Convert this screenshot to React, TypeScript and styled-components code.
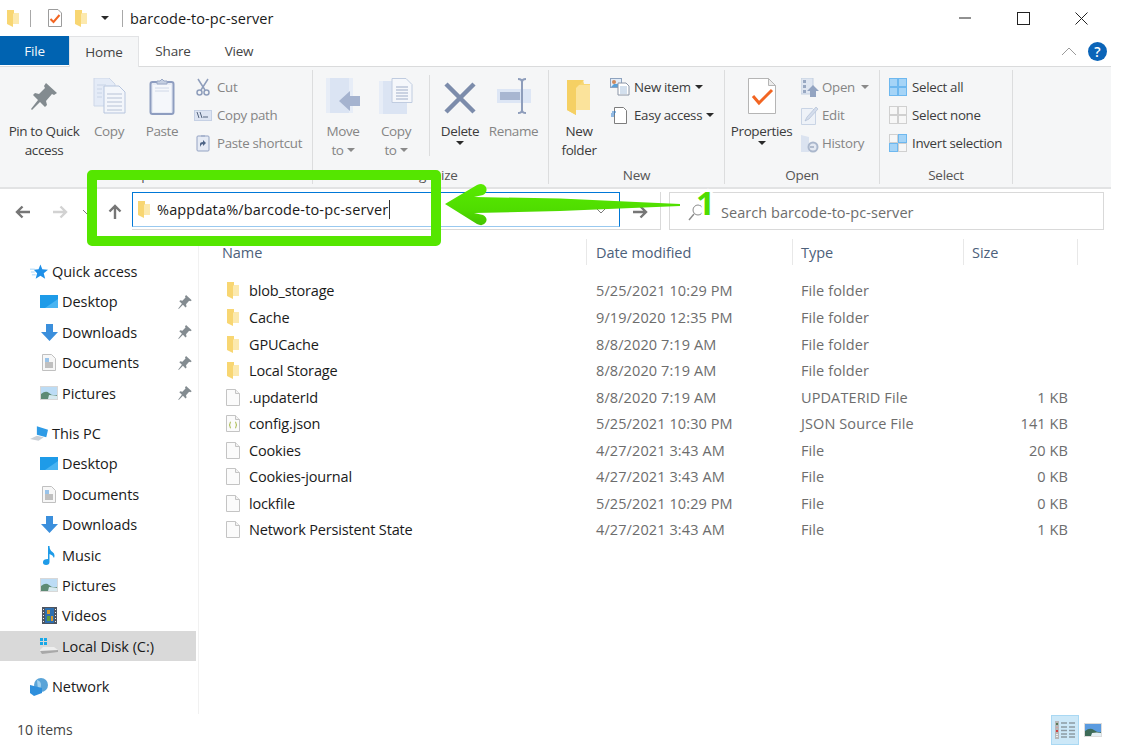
import React from 'react';
import styled, { createGlobalStyle } from 'styled-components';

const GlobalStyle = createGlobalStyle`
    html, body {
        margin: 0;
        padding: 0;
        background: #fff;
    }
    body {
        font-family: 'Open Sans', 'Noto Sans', sans-serif;
        font-size: 14.5px;
        letter-spacing: -0.05px;
        color: #1a1a1a;
    }
`;

const Page = styled.div`
    position: relative;
    width: 1142px;
    height: 752px;
    overflow: hidden;
    background: #fff;
`;

const Window = styled.div`
    display: flex;
    flex-direction: column;
    width: 1111px;
    height: 745px;
`;

/* title bar */

const TitleBar = styled.div`
    display: flex;
    align-items: center;
    height: 36px;
    flex: none;
`;

const QuickIcon = styled.span<{ $width: number }>`
    display: flex;
    justify-content: center;
    align-items: center;
    width: ${props => props.$width}px;
`;

const TitleSeparator = styled.span`
    width: 1px;
    height: 17px;
    background: #a8a8a8;
`;

const TitleText = styled.span`
    margin-left: 7px;
    letter-spacing: 0.1px;
    color: #1a1a1a;
`;

const WindowControls = styled.div`
    display: flex;
    margin-left: auto;
    margin-right: 1px;
`;

const WindowControl = styled.span`
    display: flex;
    justify-content: center;
    align-items: center;
    width: 58px;
    height: 34px;
`;

/* tabs */

const TabRow = styled.div`
    display: flex;
    align-items: flex-end;
    height: 30px;
    flex: none;
`;

const Tab = styled.div<{ $active?: boolean; $width: number }>`
    display: flex;
    justify-content: center;
    align-items: center;
    width: ${props => props.$width}px;
    height: ${props => (props.$active ? '31px' : '29px')};
    margin-bottom: ${props => (props.$active ? '-1px' : '1px')};
    background: ${props => (props.$active ? '#f5f6f7' : 'transparent')};
    border: ${props => (props.$active ? '1px solid #e2e3e5' : 'none')};
    border-bottom: none;
    box-sizing: border-box;
    font-size: 13.5px;
    letter-spacing: -0.2px;
    color: #444;
    position: relative;
`;

const FileTab = styled(Tab)`
    background: #0063b1;
    color: #f2f7fb;
    height: 29px;
    margin-bottom: 1px;
`;

const TabSpacer = styled.div`
    display: flex;
    justify-content: flex-end;
    align-items: center;
    gap: 11px;
    flex: 1;
    height: 30px;
    padding-right: 4px;
`;

const HelpBadge = styled.span`
    display: flex;
    justify-content: center;
    align-items: center;
    width: 19px;
    height: 19px;
    border-radius: 50%;
    background: #0a64b8;
    color: #fff;
    font-size: 14px;
    font-weight: 600;
`;

/* ribbon */

const Ribbon = styled.div`
    display: flex;
    height: 123px;
    flex: none;
    box-sizing: border-box;
    background: #f5f6f7;
    border-top: 1px solid #dadbdc;
    border-bottom: 2px solid #e2e3e4;
`;

const Group = styled.div<{ $width: number }>`
    display: flex;
    flex-direction: column;
    width: ${props => props.$width}px;
    margin: 3px 0;
    box-sizing: border-box;
    border-right: 1px solid #dcddde;
`;

const GroupBody = styled.div<{ $pad?: number }>`
    display: flex;
    flex: 1;
    padding-left: ${props => props.$pad || 0}px;
`;

const GroupLabel = styled.div`
    height: 19px;
    line-height: 21px;
    font-size: 13.5px;
    letter-spacing: -0.3px;
    text-align: center;
    color: #555;
`;

const LargeButton = styled.div<{ $width: number; $disabled?: boolean }>`
    display: flex;
    flex-direction: column;
    align-items: center;
    flex: none;
    width: ${props => props.$width}px;
    padding-top: 8px;
    font-size: 13.5px;
    letter-spacing: -0.4px;
    line-height: 19px;
    text-align: center;
    color: ${props => (props.$disabled ? '#858585' : '#3c3c3c')};
`;

const LargeIcon = styled.div`
    display: flex;
    justify-content: center;
    align-items: flex-start;
    height: 44px;
`;

const Caret = styled.span<{ $light?: boolean; $gap?: number }>`
    display: inline-block;
    width: 0;
    height: 0;
    margin-left: ${props => props.$gap ?? 4}px;
    vertical-align: 3px;
    border-left: 4px solid transparent;
    border-right: 4px solid transparent;
    border-top: 4px solid ${props => (props.$light ? '#8a8a8a' : '#2a2a2a')};
`;

const SmallColumn = styled.div`
    display: flex;
    flex-direction: column;
    flex: none;
    padding-top: 3px;
`;

const SmallButton = styled.div<{ $disabled?: boolean }>`
    display: flex;
    align-items: center;
    height: 28px;
    font-size: 13.3px;
    letter-spacing: -0.3px;
    white-space: nowrap;
    color: ${props => (props.$disabled ? '#858585' : '#3c3c3c')};
`;

const SmallIcon = styled.span<{ $width: number; $gap: number }>`
    display: flex;
    justify-content: center;
    flex: none;
    width: ${props => props.$width}px;
    margin-right: ${props => props.$gap}px;
`;

const OrganizeDivider = styled.div`
    width: 1px;
    height: 81px;
    margin: 5px 0 0 5px;
    background: #dcddde;
`;

/* address row */

const AddressRow = styled.div`
    display: flex;
    height: 49px;
    flex: none;
    padding-top: 3px;
    box-sizing: border-box;
`;

const NavButton = styled.span<{ $width: number }>`
    display: flex;
    justify-content: center;
    align-items: center;
    width: ${props => props.$width}px;
    height: 40px;
`;

const AddressOuter = styled.div`
    display: flex;
    width: 529px;
    height: 38px;
    margin-left: 2px;
    box-sizing: border-box;
    border: 1px solid #d9d9d9;
    border-left: none;
    border-top: none;
`;

const AddressField = styled.div`
    display: flex;
    align-items: center;
    width: 488px;
    height: 35px;
    box-sizing: border-box;
    padding: 0 13px 0 5px;
    border: 1px solid #0078d7;
    border-bottom-color: #99c9ef;
`;

const AddressText = styled.span`
    margin-left: 7px;
    padding-right: 1px;
    border-right: 1px solid #333;
    letter-spacing: 0.15px;
    color: #1a1a1a;
`;

const AddressChevron = styled.span`
    display: flex;
    margin-left: auto;
    padding-top: 2px;
`;

const GoButton = styled.span`
    display: flex;
    justify-content: center;
    align-items: center;
    flex: 1;
    height: 36px;
    padding-top: 2px;
`;

const SearchField = styled.div`
    display: flex;
    align-items: center;
    gap: 15px;
    width: 435px;
    height: 38px;
    padding: 2px 0 0 18px;
    margin-left: 8px;
    box-sizing: border-box;
    border: 1px solid #d9d9d9;
    letter-spacing: 0.05px;
    color: #6d6d6d;
`;

/* content */

const Content = styled.div`
    display: flex;
    flex: 1;
    min-height: 0;
`;

const Sidebar = styled.nav`
    width: 199px;
    flex: none;
    padding-top: 18.4px;
    box-sizing: border-box;
    border-right: 1px solid #f1f1f1;
`;

const NavGroup = styled.div`
    margin-bottom: 10px;
    margin-right: 2px;
`;

const NavRow = styled.div<{ $top?: boolean; $selected?: boolean }>`
    display: flex;
    align-items: center;
    gap: 4px;
    height: 30.4px;
    padding-left: ${props => (props.$top ? '30px' : '40px')};
    padding-right: 4px;
    background: ${props => (props.$selected ? '#d9d9d9' : 'transparent')};
    color: #1a1a1a;
`;

const NavIcon = styled.span`
    display: flex;
    justify-content: center;
    width: 18px;
    flex: none;
`;

const NavPin = styled.span`
    display: flex;
    margin-left: auto;
`;

const Main = styled.main`
    flex: 1;
    padding-top: 1px;
`;

const columns = '388px 206px 171px 114px';

const HeaderRow = styled.div`
    display: grid;
    grid-template-columns: ${columns};
    height: 26px;
    margin-bottom: 12.7px;
`;

const HeaderCell = styled.div<{ $pad: number }>`
    display: flex;
    align-items: center;
    box-sizing: border-box;
    padding-left: ${props => props.$pad}px;
    border-right: 1px solid #e8e8e8;
    color: #4c607a;
`;

const FileRow = styled.div`
    display: grid;
    grid-template-columns: ${columns};
    align-items: center;
    height: 26.55px;
`;

const NameCell = styled.div`
    display: flex;
    align-items: center;
    gap: 8px;
    padding-left: 26px;
    letter-spacing: -0.16px;
    color: #1a1a1a;
`;

const FileIcon = styled.span`
    display: flex;
    justify-content: center;
    width: 16px;
    flex: none;
`;

const InfoCell = styled.div<{ $pad: number; $right?: boolean }>`
    padding: ${props => (props.$right ? `0 ${props.$pad}px 0 0` : `0 0 0 ${props.$pad}px`)};
    text-align: ${props => (props.$right ? 'right' : 'left')};
    letter-spacing: 0.1px;
    color: #6d6d6d;
`;

/* status bar */

const StatusBar = styled.div`
    display: flex;
    align-items: center;
    height: 31px;
    flex: none;
    padding-left: 17px;
    font-size: 14px;
    letter-spacing: 0;
    color: #444;
`;

const ViewButtons = styled.div`
    display: flex;
    align-items: center;
    margin-left: auto;
    margin-right: 4px;
`;

const ViewButton = styled.span<{ $active?: boolean }>`
    display: flex;
    justify-content: center;
    align-items: center;
    width: 28px;
    height: 30px;
    box-sizing: border-box;
    background: ${props => (props.$active ? '#cce8f8' : 'transparent')};
    border: ${props => (props.$active ? '1px solid #a9d8f3' : 'none')};
`;

/* annotation on top of the screenshot */

const Highlight = styled.div`
    position: absolute;
    left: 87px;
    top: 170px;
    width: 354px;
    height: 76px;
    box-sizing: border-box;
    border: 10px solid #55e600;
    border-radius: 5px;
`;

const ArrowLayer = styled.svg`
    position: absolute;
    left: 440px;
    top: 180px;
`;

const StepNumber = styled.span`
    position: absolute;
    left: 696px;
    top: 181px;
    font-family: 'Open Sans', sans-serif;
    font-size: 33px;
    font-weight: 700;
    line-height: 44px;
    letter-spacing: 0;
    color: #4fdc00;
    -webkit-text-stroke: 6px #fff;
    paint-order: stroke fill;
`;

/* icons */

const Folder = () => (
    <svg width="12" height="17" viewBox="0 0 12 17">
        <path d="M6 3h6v11H6z" fill="#fce9ae" />
        <path d="M0 0h7v3L6 4v13l-6-3z" fill="#f8d672" />
    </svg>
);

const FolderLarge = () => (
    <svg width="24" height="37" viewBox="0 -2 24 37">
        <path d="M0 0h16l1 4h6v26H9v5L0 30z" fill="#f7d774" />
        <path d="M9 5h14v25H9z" fill="#fbe39b" />
        <path d="M0 0h17L9 8v27l-9-5z" fill="#f5d064" />
    </svg>
);

const Page_ = ({ children }: { children?: React.ReactNode }) => (
    <svg width="14" height="17" viewBox="0 0 14 17">
        <path d="M.5.5h9l4 4v12H.5z" fill="#fbfbfb" stroke="#c4c4c4" />
        <path d="M9.500.5v4h4" fill="#f1f1f1" stroke="#c4c4c4" />
        {children}
    </svg>
);

const JsonBraces = () => (
    <Page_>
        <path d="M5 7q-1 0-1 1v1q0 1-1 1 1 0 1 1v1q0 1 1 1M9 7q1 0 1 1v1q0 1 1 1-1 0-1 1v1q0 1-1 1" fill="none" stroke="#a8b84a" />
    </Page_>
);

const PinIcon = () => (
    <svg width="14" height="14" viewBox="0 0 26 27">
        <path d="M15 0l11 10-3 2-2-1-6 7 1 4-2 2-5-5-8 8-1-1 7-9-5-5 2-2 4 1 6-6-1-2z" fill="#838b90" />
    </svg>
);

const PinLarge = () => (
    <svg width="26" height="32" viewBox="0 -5 26 32">
        <path d="M15 0l11 10-3 2-2-1-6 7 1 4-2 2-5-5-8 8-1-1 7-9-5-5 2-2 4 1 6-6-1-2z" fill="#838b90" />
    </svg>
);

const CopyLarge = () => (
    <svg width="33" height="36" viewBox="0 0 33 36">
        <path d="M1 0h15l6 6v22H1z" fill="#e4ebf7" stroke="#cdd7e8" />
        <path d="M11 8h15l6 6v21H11z" fill="#f3f6fb" stroke="#b7c5de" />
        <path d="M14 16h15M14 20h15M14 24h15M14 28h15M14 32h15" stroke="#b7c2d6" />
        <path d="M4 7h9M4 11h5M4 15h5M4 19h5" stroke="#c9d4e6" />
    </svg>
);

const PasteLarge = () => (
    <svg width="26" height="37" viewBox="0 0 26 37">
        <rect x="1.500" y="4" width="23" height="32" rx="2" fill="#e6ebf5" stroke="#8e9dc0" strokeWidth="2" />
        <rect x="4" y="7" width="18" height="27" fill="#f5f7fb" />
        <path d="M8 5V3h3l2-2 2 2h3v3H8z" fill="#c5cfe2" stroke="#9aa8c5" />
        <path d="M6 10h14M6 13h14" stroke="#d0d8e8" />
    </svg>
);

const Scissors = () => (
    <svg width="14" height="18" viewBox="0 0 14 18">
        <g fill="none" stroke="#8e9dbb" strokeWidth="1.5">
            <path d="M2 1l7 11M12 1L5 12" />
            <circle cx="3.500" cy="14.500" r="2.500" />
            <circle cx="10.500" cy="14.500" r="2.500" />
        </g>
    </svg>
);

const CopyPathIcon = () => (
    <svg width="18" height="11" viewBox="0 0 18 11">
        <rect x=".5" y=".5" width="17" height="10" fill="#dde4f2" stroke="#c5d0e4" />
        <path d="M3 2l2 6M6 2l2 6M9 7h5" stroke="#55657f" fill="none" />
    </svg>
);

const PasteShortcutIcon = () => (
    <svg width="14" height="18" viewBox="0 0 14 18">
        <rect x="1" y="2" width="12" height="15" rx="1" fill="#e6ebf5" stroke="#94a3c3" />
        <path d="M5 1h4v2H5z" fill="#aab6cf" />
        <path d="M4 13v-3q0-2 3-2V6l3 3-3 3v-2q-2 0-3 3z" fill="#4e6486" />
    </svg>
);

const MoveToIcon = () => (
    <svg width="34" height="36" viewBox="0 0 34 36">
        <path d="M0 0h27v35H0z" fill="#dbe4f3" />
        <path d="M0 0h4v35H0zM23 0h4v35h-4z" fill="#e7edf7" />
        <path d="M13 23L24 13v5h10v10H24v5z" fill="#a5b3cf" />
    </svg>
);

const CopyToIcon = () => (
    <svg width="34" height="37" viewBox="0 0 34 37">
        <path d="M0 3h28v33H0z" fill="#dbe4f3" />
        <path d="M0 3h4v33H0z" fill="#e7edf7" />
        <path d="M13 .5h14l6 6v18H13z" fill="#f5f7fb" stroke="#c0cce0" />
        <path d="M17 9h12M17 12h12M17 15h12M17 18h12M17 21h12" stroke="#9fadc8" />
    </svg>
);

const DeleteX = () => (
    <svg width="34" height="37" viewBox="0 -3 34 37">
        <path d="M3 3l28 28M31 3L3 31" stroke="#7c8cab" strokeWidth="4.5" />
    </svg>
);

const RenameIcon = () => (
    <svg width="36" height="36" viewBox="0 0 36 36">
        <path d="M1 11h34v14H1z" fill="#dde6f5" />
        <path d="M4 14h20v8H4z" fill="#a8b6d1" />
        <path d="M22 1q4 0 4 3 0-3 4-3M26 4v28M22 35q4 0 4-3 0 3 4 3" fill="none" stroke="#8e9dbb" strokeWidth="2" />
    </svg>
);

const NewItemIcon = () => (
    <svg width="20" height="18" viewBox="0 0 20 18">
        <rect x=".5" y=".5" width="11" height="9" fill="#e3ecf7" stroke="#8ea3bf" />
        <circle cx="4" cy="4" r="2" fill="#d08a5c" />
        <path d="M1 9l3-3h4l3 3z" fill="#5aa0d8" />
        <path d="M8 5h8l3 3v9H8z" fill="#fff" stroke="#8a94a5" />
        <path d="M10 9h7M10 11h7M10 13h7M10 15h7" stroke="#a7c0dc" />
    </svg>
);

const EasyAccessIcon = () => (
    <svg width="17" height="19" viewBox="0 0 17 19">
        <path d="M3.500 1.500h9l3 3v13h-12z" fill="#fff" stroke="#7d7d7d" />
        <path d="M1 6h4M0 8h4M0 10h3" stroke="#2f7fd0" />
    </svg>
);

const PropertiesIcon = () => (
    <svg width="28" height="36" viewBox="0 0 28 36">
        <path d="M.5.5h20l7 7v28H.5z" fill="#fff" stroke="#b5b5b5" />
        <path d="M20.500.5v7h7z" fill="#ececec" stroke="#b5b5b5" />
        <path d="M5 18l6 7L24 12" fill="none" stroke="#f26522" strokeWidth="3" />
    </svg>
);

const PropertiesSmall = () => (
    <svg width="14" height="18" viewBox="0 0 28 36">
        <path d="M1 1h19l7 7v27H1z" fill="#fff" stroke="#9c9c9c" strokeWidth="2" />
        <path d="M5 20l6 6L23 12" fill="none" stroke="#f26522" strokeWidth="4" />
    </svg>
);

const OpenIcon = () => (
    <svg width="18" height="19" viewBox="0 0 18 19">
        <rect x="0" y="0" width="12" height="16" fill="#dfe6f1" stroke="#c3cfe0" />
        <path d="M2 2h3v3H2zM2 7h3v3H2zM2 12h3v3H2z" fill="#98a8c2" />
        <path d="M12 7l6 6h-3v6h-6v-6H6z" fill="#93a4c1" />
    </svg>
);

const EditIcon = () => (
    <svg width="18" height="19" viewBox="0 0 18 19">
        <path d="M.5 2.500h11l3 3v13H.5z" fill="#eef2f8" stroke="#c9d4e5" />
        <path d="M4 15l2-4 9-10 2 2-9 10z" fill="#d4ddec" stroke="#a9b8d0" strokeWidth=".6" />
    </svg>
);

const HistoryIcon = () => (
    <svg width="18" height="19" viewBox="0 0 18 19">
        <path d="M0 1l8 2v15H0z" fill="#dbe3f0" />
        <circle cx="12" cy="13" r="5.500" fill="#aab7cc" />
        <circle cx="12" cy="13" r="3.500" fill="#e4e9f2" />
        <path d="M9 13h4" stroke="#7d8da8" />
    </svg>
);

const SelectGrid = ({ on }: { on: number[] }) => (
    <svg width="18" height="18" viewBox="0 0 18 18">
        {[
            [0, 0],
            [9, 0],
            [0, 9],
            [9, 9],
        ].map(([x, y], i) => (
            <rect
                key={i}
                x={x + 0.5}
                y={y + 0.5}
                width="8"
                height="8"
                fill={on.includes(i) ? '#a5d4f7' : '#f7f7f7'}
                stroke={on.includes(i) ? '#6eb8ef' : '#d0d0d0'}
            />
        ))}
    </svg>
);

const ArrowIcon = ({ color, flip, up }: { color: string; flip?: boolean; up?: boolean }) => (
    <svg
        width="16"
        height="16"
        viewBox="0 0 16 16"
        transform={up ? 'rotate(90)' : flip ? 'rotate(180)' : undefined}
    >
        <path d="M2 8h13M7.500 2.500L2 8l5.500 5.500" fill="none" stroke={color} strokeWidth="2.400" />
    </svg>
);

const ChevronSmall = () => (
    <svg width="10" height="6" viewBox="0 0 10 6">
        <path d="M1 1l4 4 4-4" fill="none" stroke="#7a7a7a" />
    </svg>
);

const SearchGlass = () => (
    <svg width="18" height="18" viewBox="0 0 18 18">
        <circle cx="10" cy="7" r="5" fill="none" stroke="#8a8a8a" />
        <path d="M6 11l-5 6" stroke="#8a8a8a" strokeWidth="1.400" />
    </svg>
);

const Star = () => (
    <svg width="19" height="16" viewBox="0 0 19 16">
        <path d="M11 0l2 5 6 .5-4.500 3.700 1.500 6-5-3.200-5 3.200 1.500-6L4 5.500l5-.5z" fill="#1d8fe8" />
        <path d="M0 5h5M1 8h4M2 11h4" stroke="#a5d4f7" />
    </svg>
);

const Desktop = () => (
    <svg width="18" height="13" viewBox="0 0 18 13">
        <path d="M0 0h18v13H0z" fill="#1e9be8" />
        <path d="M5 13L18 4v9z" fill="#49b4f2" />
    </svg>
);

const Download = () => (
    <svg width="17" height="17" viewBox="0 0 17 17">
        <path d="M5 0h7v8h5l-8.500 9L0 8h5z" fill="#3b8fdc" />
    </svg>
);

const Documents = () => (
    <svg width="14" height="17" viewBox="0 0 14 17">
        <path d="M.5.5h9l4 4v12H.5z" fill="#f7f7f7" stroke="#c0c0c0" />
        <path d="M3 5h4M3 7h4" stroke="#3b8fdc" />
        <path d="M3 9h8M3 11h8M3 13h8" stroke="#888" />
    </svg>
);

const Pictures = () => (
    <svg width="18" height="14" viewBox="0 0 18 14">
        <rect width="18" height="14" fill="#d8d8d8" />
        <rect x="1" y="1" width="16" height="12" fill="#bcdcf5" />
        <path d="M1 8q5-4 8-1t8 2v4H1z" fill="#5d8a74" />
        <path d="M9 9q4 0 8 1v3H8z" fill="#d6e9ef" />
    </svg>
);

const ThisPc = () => (
    <svg width="21" height="17" viewBox="0 0 21 17">
        <path d="M8 0l13 4-2 9-11-3z" fill="#2e9be6" />
        <path d="M0 15l8-4 8 2-6 4z" fill="#c9cfd6" />
    </svg>
);

const Music = () => (
    <svg width="12" height="19" viewBox="0 0 12 19">
        <path d="M5 0h1.500q0 4 3 6t1.500 6q-1-3-4.500-4v8q0 3-3.500 3T0 16q0-3 5-3z" fill="#1e9be8" />
    </svg>
);

const Videos = () => (
    <svg width="15" height="17" viewBox="0 0 15 17">
        <rect width="15" height="17" fill="#4e5560" />
        <rect x="3" y="1" width="9" height="15" fill="#2d6fb0" />
        <path d="M5 3h3v4H5zM9 9h2v5H9z" fill="#d89a2c" />
        <path d="M5 9h3v5H5z" fill="#5a9a3c" />
        <path d="M1 2h1v1H1zM1 5h1v1H1zM1 8h1v1H1zM1 11h1v1H1zM1 14h1v1H1zM13 2h1v1h-1zM13 5h1v1h-1zM13 8h1v1h-1zM13 11h1v1h-1zM13 14h1v1h-1z" fill="#eee" />
    </svg>
);

const Drive = () => (
    <svg width="18" height="16" viewBox="0 0 18 16">
        <path d="M0 0h3v3H0zM4 0h3v3H4zM0 4h3v3H0zM4 4h3v3H4z" fill="#18a8e8" />
        <path d="M0 12l3-3h11l4 3v2H0z" fill="#eeeeee" />
        <path d="M0 13l18-1v2l-16 2z" fill="#a8a8a8" />
    </svg>
);

const Network = () => (
    <svg width="18" height="18" viewBox="0 0 18 18">
        <circle cx="11" cy="7" r="7" fill="#5aa4d8" />
        <path d="M7 2q4 1 4 5t-3 5" fill="#9fd0ee" />
        <path d="M0 7l12 3v5l-8 3-4-3z" fill="#2e8fdc" />
    </svg>
);

const DetailsView = () => (
    <svg width="20" height="20" viewBox="0 0 20 20">
        <rect x="0" y="1" width="4" height="18" fill="#b7b7b7" />
        <path d="M1 3h2v2H1z" fill="#5a7a5a" />
        <path d="M1 7h2v1H1z" fill="#d8a0a0" />
        <path d="M1 10h2v2H1z" fill="#d04040" />
        <path d="M1 14h2v1H1zM1 16h2v1H1z" fill="#eee" />
        <path d="M6 3h6M14 3h6M6 7h6M14 7h6M6 10.500h6M14 10.500h6M6 14h6M14 14h6M6 17h6M14 17h6" stroke="#8c9aa3" strokeWidth="1.300" />
    </svg>
);

const ThumbView = () => (
    <svg width="18" height="14" viewBox="0 0 18 14">
        <rect width="18" height="14" fill="#dcdcdc" />
        <rect x="1" y="1" width="16" height="12" fill="#5a9be0" />
        <path d="M1 8q5-4 9-1t7 2v4H1z" fill="#3e6b58" />
        <path d="M8 10q5-1 9 0v3H7z" fill="#e4eef3" />
    </svg>
);

const navPlaces = {
    desktop: ['Desktop', <Desktop key="d" />],
    downloads: ['Downloads', <Download key="d" />],
    documents: ['Documents', <Documents key="d" />],
    pictures: ['Pictures', <Pictures key="d" />],
    music: ['Music', <Music key="d" />],
    videos: ['Videos', <Videos key="d" />],
} as const;

const quickAccess = ['desktop', 'downloads', 'documents', 'pictures'] as const;
const thisPc = ['desktop', 'documents', 'downloads', 'music', 'pictures', 'videos'] as const;

const files = [
    { name: 'blob_storage', date: '5/25/2021 10:29 PM', type: 'File folder', size: '', kind: 'folder' },
    { name: 'Cache', date: '9/19/2020 12:35 PM', type: 'File folder', size: '', kind: 'folder' },
    { name: 'GPUCache', date: '8/8/2020 7:19 AM', type: 'File folder', size: '', kind: 'folder' },
    { name: 'Local Storage', date: '8/8/2020 7:19 AM', type: 'File folder', size: '', kind: 'folder' },
    { name: '.updaterId', date: '8/8/2020 7:19 AM', type: 'UPDATERID File', size: '1 KB', kind: 'file' },
    { name: 'config.json', date: '5/25/2021 10:30 PM', type: 'JSON Source File', size: '141 KB', kind: 'json' },
    { name: 'Cookies', date: '4/27/2021 3:43 AM', type: 'File', size: '20 KB', kind: 'file' },
    { name: 'Cookies-journal', date: '4/27/2021 3:43 AM', type: 'File', size: '0 KB', kind: 'file' },
    { name: 'lockfile', date: '5/25/2021 10:29 PM', type: 'File', size: '0 KB', kind: 'file' },
    { name: 'Network Persistent State', date: '4/27/2021 3:43 AM', type: 'File', size: '1 KB', kind: 'file' },
];

const fileIcon = (kind: string) => {
    if (kind === 'folder') return <Folder />;
    if (kind === 'json') return <JsonBraces />;
    return <Page_ />;
};

const App = () => (
    <Page>
        <GlobalStyle />
        <Window>
            <TitleBar>
                <QuickIcon $width={26}>
                    <Folder />
                </QuickIcon>
                <QuickIcon $width={9}>
                    <TitleSeparator />
                </QuickIcon>
                <QuickIcon $width={39}>
                    <PropertiesSmall />
                </QuickIcon>
                <QuickIcon $width={14}>
                    <Folder />
                </QuickIcon>
                <QuickIcon $width={34}>
                    <Caret $gap={0} />
                </QuickIcon>
                <TitleSeparator />
                <TitleText>barcode-to-pc-server</TitleText>
                <WindowControls>
                    <WindowControl>
                        <svg width="12" height="2" viewBox="0 0 12 2">
                            <path d="M0 1h12" stroke="#222" />
                        </svg>
                    </WindowControl>
                    <WindowControl>
                        <svg width="13" height="13" viewBox="0 0 13 13">
                            <rect x=".5" y=".5" width="12" height="12" fill="none" stroke="#222" />
                        </svg>
                    </WindowControl>
                    <WindowControl>
                        <svg width="13" height="13" viewBox="0 0 13 13">
                            <path d="M.5.5l12 12M12.500.5l-12 12" stroke="#222" />
                        </svg>
                    </WindowControl>
                </WindowControls>
            </TitleBar>

            <TabRow>
                <FileTab $width={69}>File</FileTab>
                <Tab $active $width={70}>
                    Home
                </Tab>
                <Tab $width={68}>Share</Tab>
                <Tab $width={64}>View</Tab>
                <TabSpacer>
                    <svg width="16" height="9" viewBox="0 0 16 9">
                        <path d="M1 8l7-7 7 7" fill="none" stroke="#9a9a9a" />
                    </svg>
                    <HelpBadge>?</HelpBadge>
                </TabSpacer>
            </TabRow>

            <Ribbon>
                <Group $width={313}>
                    <GroupBody>
                        <LargeButton $width={88}>
                            <LargeIcon>
                                <PinLarge />
                            </LargeIcon>
                            Pin to Quick
                            <br />
                            access
                        </LargeButton>
                        <LargeButton $width={42} $disabled>
                            <LargeIcon>
                                <CopyLarge />
                            </LargeIcon>
                            Copy
                        </LargeButton>
                        <LargeButton $width={64} $disabled>
                            <LargeIcon>
                                <PasteLarge />
                            </LargeIcon>
                            Paste
                        </LargeButton>
                        <SmallColumn>
                            <SmallButton $disabled>
                                <SmallIcon $width={18} $gap={5}>
                                    <Scissors />
                                </SmallIcon>
                                Cut
                            </SmallButton>
                            <SmallButton $disabled>
                                <SmallIcon $width={18} $gap={5}>
                                    <CopyPathIcon />
                                </SmallIcon>
                                Copy path
                            </SmallButton>
                            <SmallButton $disabled>
                                <SmallIcon $width={18} $gap={5}>
                                    <PasteShortcutIcon />
                                </SmallIcon>
                                Paste shortcut
                            </SmallButton>
                        </SmallColumn>
                    </GroupBody>
                    <GroupLabel>Clipboard</GroupLabel>
                </Group>

                <Group $width={236}>
                    <GroupBody $pad={5}>
                        <LargeButton $width={50} $disabled>
                            <LargeIcon>
                                <MoveToIcon />
                            </LargeIcon>
                            Move
                            <br />
                            <span>
                                to
                                <Caret $light $gap={3} />
                            </span>
                        </LargeButton>
                        <LargeButton $width={56} $disabled>
                            <LargeIcon>
                                <CopyToIcon />
                            </LargeIcon>
                            Copy
                            <br />
                            <span>
                                to
                                <Caret $light $gap={3} />
                            </span>
                        </LargeButton>
                        <OrganizeDivider />
                        <LargeButton $width={60}>
                            <LargeIcon>
                                <DeleteX />
                            </LargeIcon>
                            Delete
                            <br />
                            <Caret $gap={0} />
                        </LargeButton>
                        <LargeButton $width={47} $disabled>
                            <LargeIcon>
                                <RenameIcon />
                            </LargeIcon>
                            Rename
                        </LargeButton>
                    </GroupBody>
                    <GroupLabel>Organize</GroupLabel>
                </Group>

                <Group $width={176}>
                    <GroupBody>
                        <LargeButton $width={60}>
                            <LargeIcon>
                                <FolderLarge />
                            </LargeIcon>
                            New
                            <br />
                            folder
                        </LargeButton>
                        <SmallColumn>
                            <SmallButton>
                                <SmallIcon $width={21} $gap={4}>
                                    <NewItemIcon />
                                </SmallIcon>
                                New item
                                <Caret $gap={4} />
                            </SmallButton>
                            <SmallButton>
                                <SmallIcon $width={21} $gap={4}>
                                    <EasyAccessIcon />
                                </SmallIcon>
                                Easy access
                                <Caret $gap={4} />
                            </SmallButton>
                        </SmallColumn>
                    </GroupBody>
                    <GroupLabel>New</GroupLabel>
                </Group>

                <Group $width={155}>
                    <GroupBody>
                        <LargeButton $width={73}>
                            <LargeIcon>
                                <PropertiesIcon />
                            </LargeIcon>
                            Properties
                            <br />
                            <Caret $gap={0} />
                        </LargeButton>
                        <SmallColumn>
                            <SmallButton $disabled>
                                <SmallIcon $width={23} $gap={1}>
                                    <OpenIcon />
                                </SmallIcon>
                                Open
                                <Caret $light $gap={6} />
                            </SmallButton>
                            <SmallButton $disabled>
                                <SmallIcon $width={23} $gap={1}>
                                    <EditIcon />
                                </SmallIcon>
                                Edit
                            </SmallButton>
                            <SmallButton $disabled>
                                <SmallIcon $width={23} $gap={1}>
                                    <HistoryIcon />
                                </SmallIcon>
                                History
                            </SmallButton>
                        </SmallColumn>
                    </GroupBody>
                    <GroupLabel>Open</GroupLabel>
                </Group>

                <Group $width={133}>
                    <GroupBody $pad={9}>
                        <SmallColumn>
                            <SmallButton>
                                <SmallIcon $width={18} $gap={5}>
                                    <SelectGrid on={[0, 1, 2, 3]} />
                                </SmallIcon>
                                Select all
                            </SmallButton>
                            <SmallButton>
                                <SmallIcon $width={18} $gap={5}>
                                    <SelectGrid on={[]} />
                                </SmallIcon>
                                Select none
                            </SmallButton>
                            <SmallButton>
                                <SmallIcon $width={18} $gap={5}>
                                    <SelectGrid on={[1, 2]} />
                                </SmallIcon>
                                Invert selection
                            </SmallButton>
                        </SmallColumn>
                    </GroupBody>
                    <GroupLabel>Select</GroupLabel>
                </Group>
            </Ribbon>

            <AddressRow>
                <NavButton $width={46}>
                    <ArrowIcon color="#767676" />
                </NavButton>
                <NavButton $width={28}>
                    <ArrowIcon color="#d2d2d2" flip />
                </NavButton>
                <NavButton $width={26}>
                    <ChevronSmall />
                </NavButton>
                <NavButton $width={30}>
                    <ArrowIcon color="#767676" up />
                </NavButton>
                <AddressOuter>
                    <AddressField>
                        <Folder />
                        <AddressText>%appdata%/barcode-to-pc-server</AddressText>
                        <AddressChevron>
                            <ChevronSmall />
                        </AddressChevron>
                    </AddressField>
                    <GoButton>
                        <ArrowIcon color="#767676" flip />
                    </GoButton>
                </AddressOuter>
                <SearchField>
                    <SearchGlass />
                    Search barcode-to-pc-server
                </SearchField>
            </AddressRow>

            <Content>
                <Sidebar>
                    <NavGroup>
                        <NavRow $top>
                            <NavIcon>
                                <Star />
                            </NavIcon>
                            Quick access
                        </NavRow>
                        {quickAccess.map(key => (
                            <NavRow key={key}>
                                <NavIcon>{navPlaces[key][1]}</NavIcon>
                                {navPlaces[key][0]}
                                <NavPin>
                                    <PinIcon />
                                </NavPin>
                            </NavRow>
                        ))}
                    </NavGroup>
                    <NavGroup>
                        <NavRow $top>
                            <NavIcon>
                                <ThisPc />
                            </NavIcon>
                            This PC
                        </NavRow>
                        {thisPc.map(key => (
                            <NavRow key={key}>
                                <NavIcon>{navPlaces[key][1]}</NavIcon>
                                {navPlaces[key][0]}
                            </NavRow>
                        ))}
                        <NavRow $selected>
                            <NavIcon>
                                <Drive />
                            </NavIcon>
                            Local Disk (C:)
                        </NavRow>
                    </NavGroup>
                    <NavGroup>
                        <NavRow $top>
                            <NavIcon>
                                <Network />
                            </NavIcon>
                            Network
                        </NavRow>
                    </NavGroup>
                </Sidebar>
                <Main>
                    <HeaderRow>
                        <HeaderCell $pad={23}>Name</HeaderCell>
                        <HeaderCell $pad={9}>Date modified</HeaderCell>
                        <HeaderCell $pad={8}>Type</HeaderCell>
                        <HeaderCell $pad={8}>Size</HeaderCell>
                    </HeaderRow>
                    {files.map(file => (
                        <FileRow key={file.name}>
                            <NameCell>
                                <FileIcon>{fileIcon(file.kind)}</FileIcon>
                                {file.name}
                            </NameCell>
                            <InfoCell $pad={9}>{file.date}</InfoCell>
                            <InfoCell $pad={8}>{file.type}</InfoCell>
                            <InfoCell $pad={10} $right>
                                {file.size}
                            </InfoCell>
                        </FileRow>
                    ))}
                </Main>
            </Content>

            <StatusBar>
                10 items
                <ViewButtons>
                    <ViewButton $active>
                        <DetailsView />
                    </ViewButton>
                    <ViewButton>
                        <ThumbView />
                    </ViewButton>
                </ViewButtons>
            </StatusBar>
        </Window>

        <ArrowLayer width="250" height="50" viewBox="440 180 250 50">
            <defs>
                <linearGradient id="arrowFill" x1="0" y1="0" x2="0" y2="1">
                    <stop offset="0" stopColor="#58ea00" />
                    <stop offset="0.65" stopColor="#4fdc00" />
                    <stop offset="1" stopColor="#44c400" />
                </linearGradient>
            </defs>
            <path
                d="M445 204L477 185Q483 182 486 187Q488 192 483 195L474 197L560 198.500L680 204L680 206L560 211L474 213L483 215Q488 218 486 222Q483 227 477 224z"
                fill="url(#arrowFill)"
            />
        </ArrowLayer>
        <Highlight />
        <StepNumber>1</StepNumber>
    </Page>
);

export default App;
